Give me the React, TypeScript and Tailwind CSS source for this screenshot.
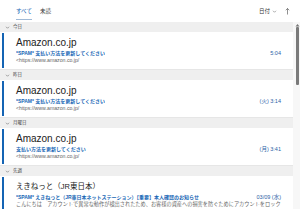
import React from "react";

type Mail = {
  group: string;
  sender: string;
  senderSize: string;
  subject: string;
  preview: string;
  time: string;
};

const mails: Mail[] = [
  {
    group: "今日",
    sender: "Amazon.co.jp",
    senderSize: "text-[10px]",
    subject: "*SPAM* 支払い方法を更新してください",
    preview: "<https://www.amazon.co.jp/",
    time: "5:04",
  },
  {
    group: "昨日",
    sender: "Amazon.co.jp",
    senderSize: "text-[10px]",
    subject: "*SPAM* 支払い方法を更新してください",
    preview: "<https://www.amazon.co.jp/",
    time: "(火) 3:14",
  },
  {
    group: "月曜日",
    sender: "Amazon.co.jp",
    senderSize: "text-[10px]",
    subject: "支払い方法を更新してください",
    preview: "<https://www.amazon.co.jp/",
    time: "(月) 3:41",
  },
  {
    group: "先週",
    sender: "えきねっと（JR東日本）",
    senderSize: "text-[7.5px]",
    subject: "*SPAM* えきねっと（JR東日本ネットステーション）【重要】本人確認のお知らせ",
    preview:
      "こんにちは　アカウントで異常な動作が検出されたため、お客様の資産への損害を防ぐためにアカウントをロック",
    time: "03/09 (水)",
  },
];

function GroupHeader({ label }: { label: string }) {
  return (
    <div className="h-[10px] bg-[#efefef] flex items-center pl-[5px] text-[4.5px] text-[#444]">
      <svg width="5" height="5" viewBox="0 0 10 10" className="mr-[3px]">
        <path d="M2 3.5 L5 6.5 L8 3.5" fill="none" stroke="#666" strokeWidth="1.2" />
      </svg>
      <span>{label}</span>
    </div>
  );
}

function MailItem({ mail }: { mail: Mail }) {
  return (
    <div className="relative h-[38px] border-b border-[#e6e6e6] bg-white">
      <div className="absolute left-[2px] top-[1px] bottom-[1px] w-[2px] bg-[#1464b4]" />
      <div className="pl-[16px] pr-[12px] pt-[5px] flex flex-col">
        <div className={`${mail.senderSize} h-[12px] leading-[12px] text-[#222] whitespace-nowrap`}>
          {mail.sender}
        </div>
        <div className="flex items-center justify-between mt-[1px] h-[7px]">
          <span className="text-[5px] leading-[7px] text-[#1666b5] font-bold whitespace-nowrap overflow-hidden">
            {mail.subject}
          </span>
          <span className="text-[5.5px] leading-[7px] text-[#2a62a6] whitespace-nowrap ml-[20px]">
            {mail.time}
          </span>
        </div>
        <div className="text-[5.2px] leading-[7px] text-[#666] whitespace-nowrap">
          {mail.preview}
        </div>
      </div>
    </div>
  );
}

export default function App() {
  return (
    <div
      className="w-[300px] h-[209px] bg-white overflow-hidden flex flex-col"
      style={{ fontFamily: '"Liberation Sans", "Noto Sans CJK JP", sans-serif' }}
    >
      <div className="h-[22px] flex items-center justify-between pl-[16px] pr-[10px] text-[5.5px] text-[#333]">
        <div className="flex gap-[8px] h-full items-center">
          <div className="relative h-full flex items-center">
            <span className="text-[#1464b4]">すべて</span>
            <div className="absolute left-0 right-0 bottom-[2px] h-[1px] bg-[#9fb9d6]" />
          </div>
          <span>未読</span>
        </div>
        <div className="flex items-center gap-[8px]">
          <span className="flex items-center gap-[2px]">
            日付
            <svg width="5" height="5" viewBox="0 0 10 10">
              <path d="M2 3.5 L5 6.5 L8 3.5" fill="none" stroke="#555" strokeWidth="1" />
            </svg>
          </span>
          <svg width="5" height="7" viewBox="0 0 10 14">
            <path d="M5 13 V1 M1.5 4.5 L5 1 L8.5 4.5" fill="none" stroke="#444" strokeWidth="1.2" />
          </svg>
        </div>
      </div>
      <div className="flex flex-1 min-h-0">
        <div className="w-[293px] flex flex-col">
          {mails.map((m) => (
            <div key={m.group} className="flex flex-col">
              <GroupHeader label={m.group} />
              <MailItem mail={m} />
            </div>
          ))}
        </div>
        <div className="w-[7px] flex flex-col items-center bg-[#f7f7f7] pl-[2px]">
          <svg width="5" height="4" viewBox="0 0 10 8" className="mt-[1px]">
            <path d="M1 7 L5 2 L9 7 Z" fill="#777" />
          </svg>
          <div className="w-[3px] h-[58px] bg-[#7a7a7a] rounded-[1px]" />
        </div>
      </div>
    </div>
  );
}
